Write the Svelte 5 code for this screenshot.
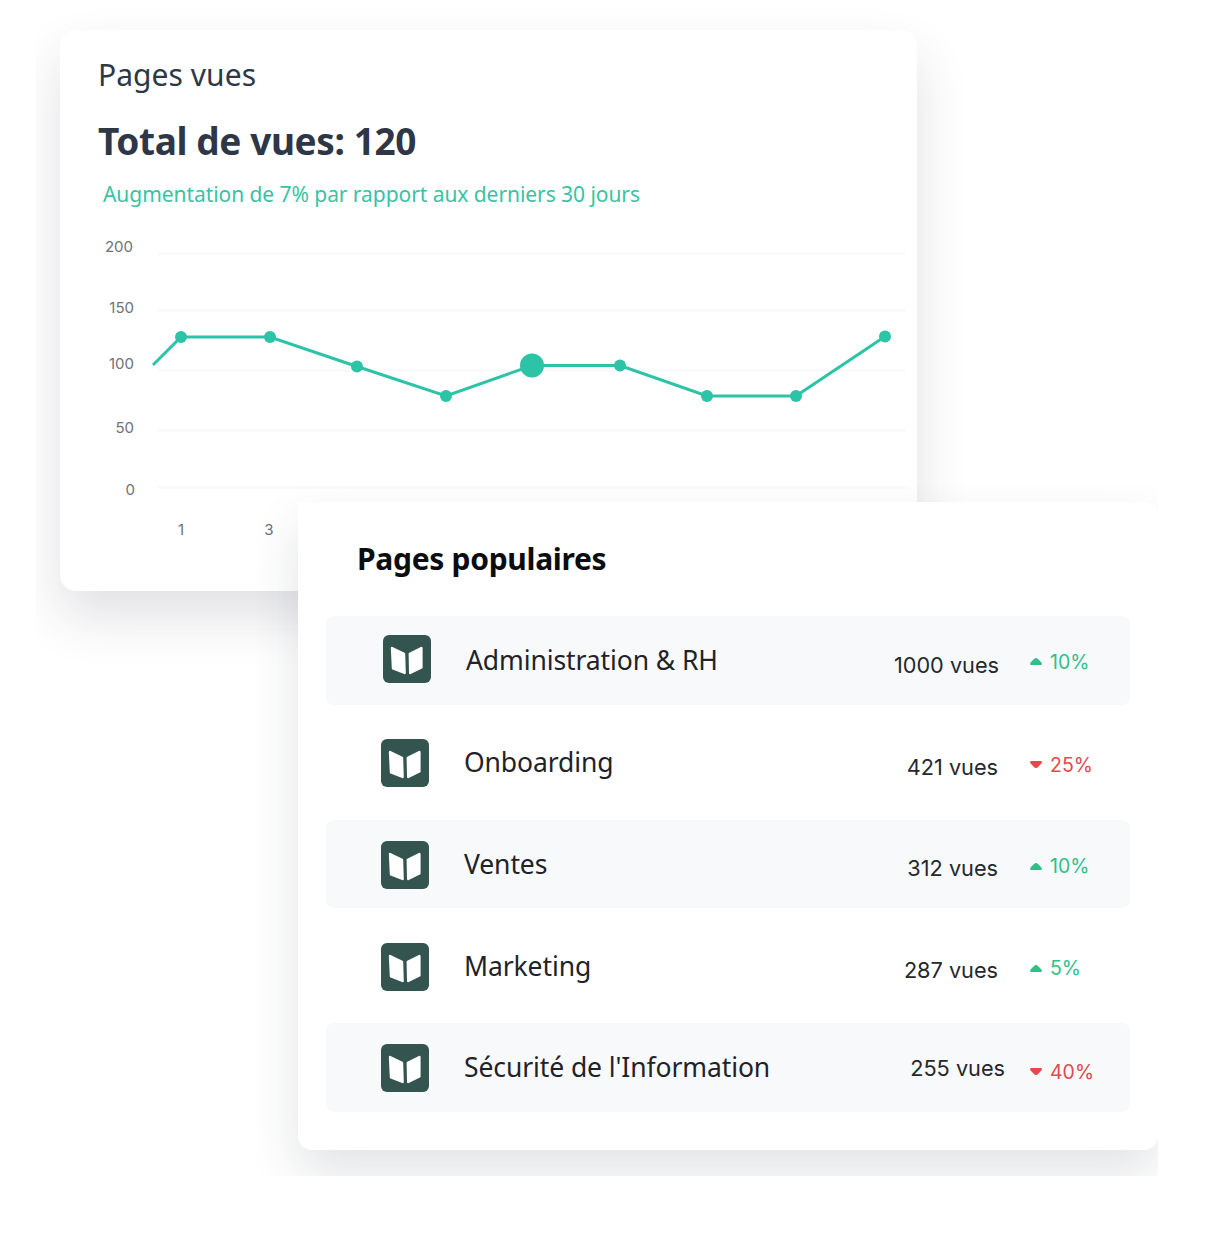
<script lang="ts">
	const yTicks = [
		{ label: '200', x: 133, y: 252, grid: 253.5 },
		{ label: '150', x: 134, y: 313, grid: 310.5 },
		{ label: '100', x: 134, y: 369, grid: 370.5 },
		{ label: '50', x: 134, y: 433, grid: 430.5 },
		{ label: '0', x: 135, y: 495, grid: 487.5 }
	];
	const xTicks = [
		{ label: '1', x: 181 },
		{ label: '3', x: 269 }
	];
	const points = [
		[181, 337],
		[270, 337],
		[357, 366.5],
		[446, 396],
		[532, 365.5],
		[620, 365.5],
		[707, 396],
		[796, 396],
		[885, 336.5]
	];
	const activeIndex = 4;
	const line = '153,365 ' + points.map((p) => p.join(',')).join(' ');

	const pages = [
		{ name: 'Administration & RH', views: '1000 vues', change: '10%', up: true, variant: 'first' },
		{ name: 'Onboarding', views: '421 vues', change: '25%', up: false, variant: '' },
		{ name: 'Ventes', views: '312 vues', change: '10%', up: true, variant: '' },
		{ name: 'Marketing', views: '287 vues', change: '5%', up: true, variant: '' },
		{ name: "Sécurité de l'Information", views: '255 vues', change: '40%', up: false, variant: 'last' }
	];
</script>

<main class="stage">
	<div class="chart-clip">
		<section class="chart-card">
			<header>
				<h2>Pages vues</h2>
				<p class="total">Total de vues: 120</p>
				<p class="trend">Augmentation de 7% par rapport aux derniers 30 jours</p>
			</header>
			<svg class="chart" viewBox="60 232 857 359" width="857" height="359" aria-label="Courbe des pages vues">
				{#each yTicks as tick (tick.label)}
					<line class="grid" x1="158" x2="905" y1={tick.grid} y2={tick.grid} />
					<text class="tick" x={tick.x} y={tick.y} text-anchor="end">{tick.label}</text>
				{/each}
				{#each xTicks as tick (tick.label)}
					<text class="tick" x={tick.x} y="535" text-anchor="middle">{tick.label}</text>
				{/each}
				<polyline class="line" points={line} />
				{#each points as point, i}
					<circle class="dot" cx={point[0]} cy={point[1]} r={i === activeIndex ? 12 : 6} />
				{/each}
			</svg>
		</section>
	</div>

	<div class="popular-clip">
		<section class="popular-card">
			<h2>Pages populaires</h2>
			<ul>
				{#each pages as page (page.name)}
					<li class={page.variant}>
						<svg class="book" viewBox="0 0 48 48" width="48" height="48" aria-hidden="true">
							<rect width="48" height="48" rx="6" fill="#34544f" />
							<path d="M9 13 21 18.8 21.6 38 10 33.4Z" />
							<path d="M26.8 18.8 38.4 13 38.4 32.4 27.2 38Z" />
						</svg>
						<span class="name">{page.name}</span>
						<span class="views">{page.views}</span>
						<span class="change" class:up={page.up} class:down={!page.up}>
							<svg viewBox="0 0 12 7" width="12" height="7" aria-hidden="true">
								{#if page.up}
									<path d="M6 0C7.5 0 8.5 1.5 9.5 2.5L11.6 4.8C12.2 5.6 11.8 7 10.8 7H1.2C.2 7-.2 5.6.4 4.8L2.5 2.5C3.5 1.5 4.5 0 6 0Z" />
								{:else}
									<path d="M6 7C7.5 7 8.5 5.5 9.5 4.5L11.6 2.2C12.2 1.4 11.8 0 10.8 0H1.2C.2 0-.2 1.4.4 2.2L2.5 4.5C3.5 5.5 4.5 7 6 7Z" />
								{/if}
							</svg>
							{page.change}
						</span>
					</li>
				{/each}
			</ul>
		</section>
	</div>
</main>

<style>
	:global(body) {
		background: #fff;
		font-family: 'Noto Sans', 'Liberation Sans', sans-serif;
	}

	.stage {
		width: 1218px;
		height: 1240px;
		overflow: hidden;
	}

	.chart-clip {
		box-sizing: border-box;
		width: 964px;
		height: 681px;
		margin-left: 36px;
		padding: 30px 0 0 24px;
		overflow: hidden;
	}

	.chart-card {
		width: 857px;
		height: 561px;
		background: #fff;
		border-radius: 16px;
		box-shadow: 0 26px 52px rgba(40, 44, 62, 0.14);
	}

	header {
		box-sizing: border-box;
		height: 202px;
		padding: 26px 0 0 38px;
		color: #2d3748;
	}

	h2 {
		margin: 0;
		font-weight: 400;
	}

	header h2 {
		font-size: 30px;
		line-height: 38px;
		letter-spacing: 0.05px;
	}

	.total {
		margin: 25px 0 0;
		font-size: 37px;
		line-height: 44px;
		font-weight: 700;
		letter-spacing: -0.4px;
	}

	.trend {
		margin: 16px 0 0 5px;
		font-size: 21px;
		line-height: 30px;
		color: #38c3a4;
		letter-spacing: -0.06px;
	}

	.chart {
		display: block;
	}

	.grid {
		stroke: #f8f8fa;
		stroke-width: 2;
	}

	.tick {
		font-family: Inter, 'Noto Sans', sans-serif;
		font-size: 15px;
		fill: #6e7279;
	}

	.line {
		fill: none;
		stroke: #2cc3a6;
		stroke-width: 3;
	}

	.dot {
		fill: #2cc3a6;
	}

	.popular-clip {
		position: relative;
		box-sizing: border-box;
		width: 903px;
		height: 690px;
		margin: -195px 0 0 255px;
		padding: 16px 0 0 43px;
		overflow: hidden;
	}

	.popular-card {
		box-sizing: border-box;
		width: 860px;
		height: 648px;
		padding: 36px 28px 0;
		background: #fff;
		border-radius: 0 14px 14px 14px;
		box-shadow: 0 24px 50px rgba(40, 44, 62, 0.13);
	}

	.popular-card h2 {
		margin-left: 31px;
		font-size: 30px;
		line-height: 42px;
		font-weight: 700;
		color: #0b0d10;
		letter-spacing: -0.3px;
	}

	ul {
		list-style: none;
		margin: 36px 0 0;
		padding: 0;
		display: flex;
		flex-direction: column;
		gap: 13.3px;
	}

	li {
		display: flex;
		align-items: center;
		height: 88.5px;
		padding-left: 55px;
		border-radius: 8px;
		color: #1f2328;
	}

	li:nth-child(odd) {
		background: #f8f9fb;
	}

	li.first {
		padding-left: 57px;
	}

	.book {
		flex: none;
		margin-top: 2px;
	}

	li.first .book {
		margin: 0 0 2px;
	}

	.book path {
		fill: #fff;
		stroke: #fff;
		stroke-width: 2.4;
		stroke-linejoin: round;
	}

	.name {
		flex: 1;
		margin-left: 35px;
		font-size: 26.5px;
		letter-spacing: -0.1px;
	}

	.views {
		margin: 9px 32px 0 0;
		font-family: Inter, 'Noto Sans', sans-serif;
		font-size: 21.7px;
		color: #25282c;
	}

	li.first .views {
		margin-right: 31px;
	}

	li.last .views {
		margin: 2px 25px 0 0;
	}

	.change {
		display: flex;
		align-items: center;
		gap: 8px;
		width: 100px;
		margin-top: 5px;
		font-family: Inter, 'Noto Sans', sans-serif;
		font-size: 19.5px;
	}

	li.first .change {
		margin-top: 3px;
	}

	li.last .change {
		margin-top: 9px;
	}

	.change.up {
		color: #2fc08a;
	}

	.change.down {
		color: #e5484d;
	}

	.change svg {
		flex: none;
		fill: currentColor;
	}
</style>
